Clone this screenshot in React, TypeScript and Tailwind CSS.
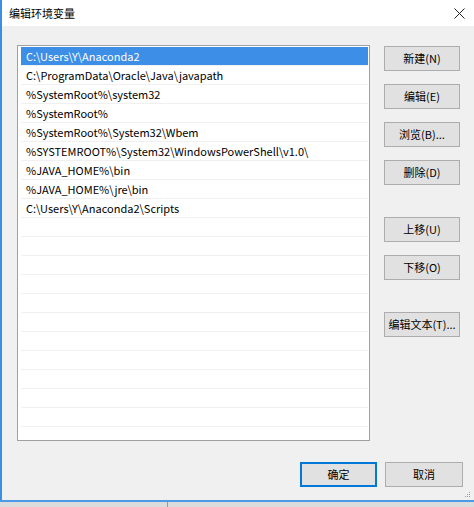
import React from "react";

const paths = [
  "C:\\Users\\Y\\Anaconda2",
  "C:\\ProgramData\\Oracle\\Java\\javapath",
  "%SystemRoot%\\system32",
  "%SystemRoot%",
  "%SystemRoot%\\System32\\Wbem",
  "%SYSTEMROOT%\\System32\\WindowsPowerShell\\v1.0\\",
  "%JAVA_HOME%\\bin",
  "%JAVA_HOME%\\jre\\bin",
  "C:\\Users\\Y\\Anaconda2\\Scripts",
];

const font = { fontFamily: '"Noto Sans CJK SC", "Noto Sans", sans-serif' };

function Btn({ label, primary = false, className = "" }: { label: string; primary?: boolean; className?: string }) {
  return (
    <button
      className={
        "h-[25px] text-[11px] text-black bg-[#e1e1e1] border leading-none " +
        (primary ? "border-[#0078d7] shadow-[inset_0_0_0_1px_#0078d7] " : "border-[#adadad] ") +
        className
      }
    >
      {label}
    </button>
  );
}

export default function App() {
  const rows = [...paths, ...Array(13).fill("")];
  return (
    <div className="w-[474px] h-[507px] flex flex-col overflow-hidden bg-[#f0f0f0]" style={font}>
      <div className="flex flex-1 flex-col border-l-2 border-[#3c8ee0]">
        {/* title bar */}
        <div className="h-[26px] bg-white flex items-center justify-between pl-[7px] pr-[8px]">
          <span className="text-[11px] text-black">编辑环境变量</span>
          <svg width="11" height="11" viewBox="0 0 11 11" className="mr-[1px]">
            <path d="M0.5 0.5 L10.5 10.5 M10.5 0.5 L0.5 10.5" stroke="#222" strokeWidth="1" />
          </svg>
        </div>

        {/* body */}
        <div className="flex-1 flex flex-col pl-[15px] pt-[19px] relative">
          <div className="flex">
            <div className="w-[353px] h-[396px] border border-[#a0a0a0] bg-white pt-[1px] pl-[3px] pr-[1px] overflow-hidden">
              {rows.map((p, i) => (
                <div
                  key={i}
                  className={
                    "h-[19px] flex items-center pl-[5px] text-[11px] whitespace-nowrap border-b border-[#f0f0f0] " +
                    (i === 0 ? "bg-[#3c8ee6] text-white" : "text-black")
                  }
                >
                  {p}
                </div>
              ))}
            </div>
            <div className="flex flex-col ml-[14px] w-[76px] pt-[1px]">
              <Btn label="新建(N)" />
              <Btn label="编辑(E)" className="mt-[13px]" />
              <Btn label="浏览(B)..." className="mt-[13px]" />
              <Btn label="删除(D)" className="mt-[13px]" />
              <Btn label="上移(U)" className="mt-[32px]" />
              <Btn label="下移(O)" className="mt-[13px]" />
              <Btn label="编辑文本(T)..." className="mt-[32px]" />
            </div>
          </div>
          <div className="flex justify-end gap-[8px] mt-[21px] pr-[11px]">
            <Btn label="确定" primary className="w-[77px]" />
            <Btn label="取消" className="w-[78px]" />
          </div>
          <svg width="6" height="6" viewBox="0 0 6 6" className="absolute right-[3px] bottom-[2px]">
            <rect x="4" y="0" width="1" height="1" fill="#9a9a9a" />
            <rect x="2" y="2" width="1" height="1" fill="#9a9a9a" />
            <rect x="4" y="2" width="1" height="1" fill="#9a9a9a" />
            <rect x="0" y="4" width="1" height="1" fill="#9a9a9a" />
            <rect x="2" y="4" width="1" height="1" fill="#9a9a9a" />
            <rect x="4" y="4" width="1" height="1" fill="#9a9a9a" />
          </svg>
        </div>
      </div>
      <div className="h-[2px] bg-[#4a9ae6]" />
      <div className="h-[5px] bg-[#dcdcdc] flex">
        <div className="w-[168px] border-r border-[#9a9a9a]" />
      </div>
    </div>
  );
}
